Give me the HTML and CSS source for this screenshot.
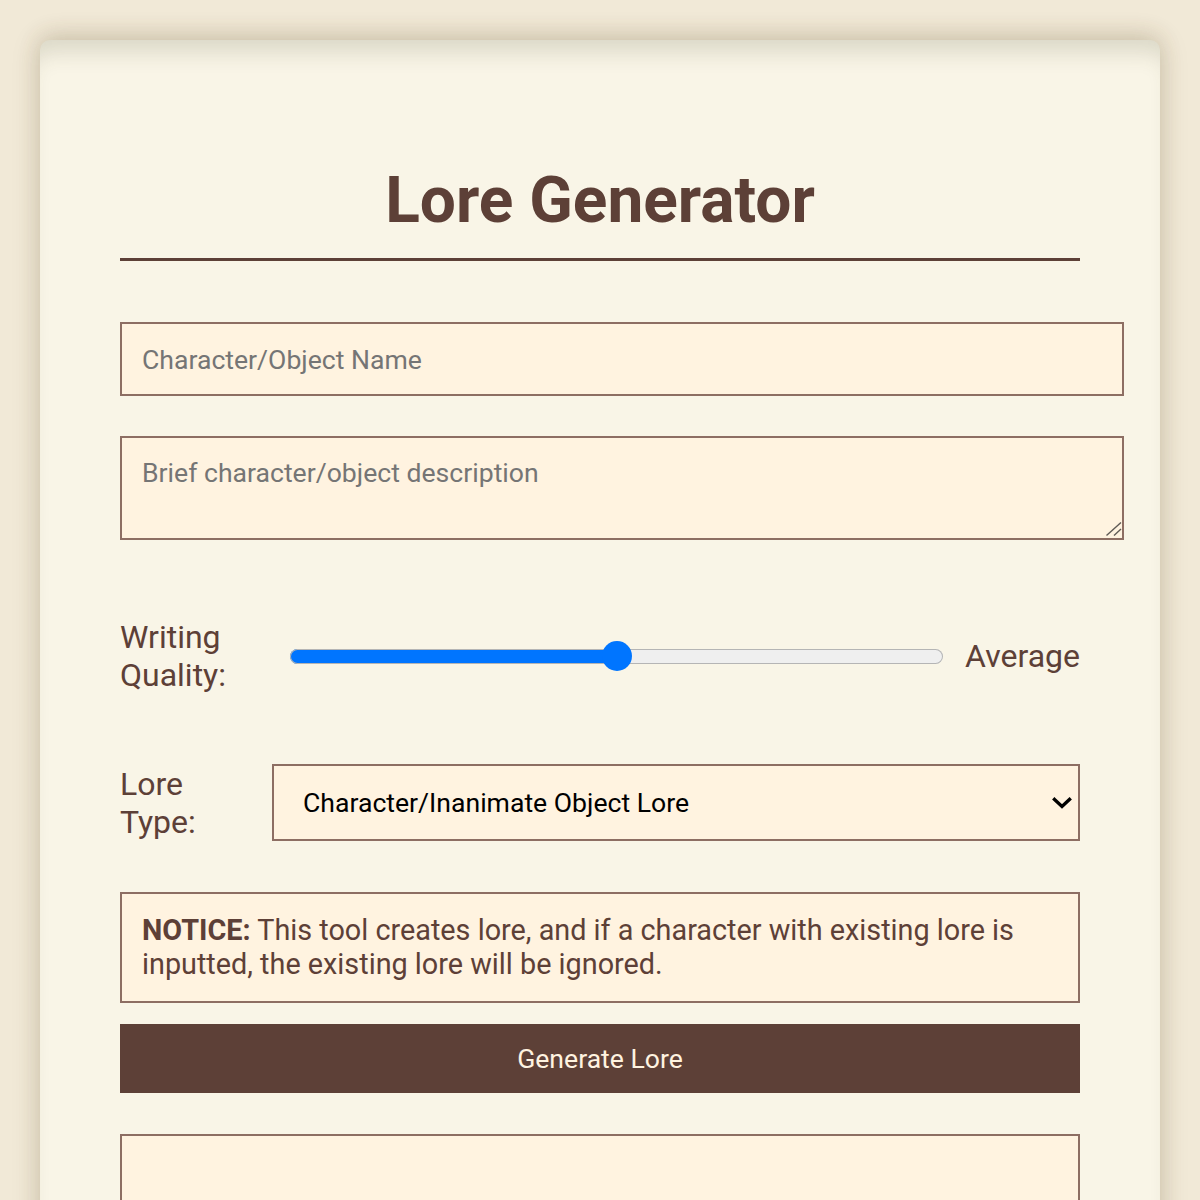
FILE: index.html
```html
<!DOCTYPE html>
<html lang="en">
<head>
<meta charset="utf-8">
<title>Lore Generator</title>
<link rel="stylesheet" href="styles.css">
</head>
<body>
<main class="card">
  <h1 class="title">Lore Generator</h1>
  <input class="field name-field" type="text" placeholder="Character/Object Name">
  <div class="desc-wrap">
    <textarea class="field desc-field" placeholder="Brief character/object description"></textarea>
    <svg class="grip" width="16" height="16" viewBox="0 0 16 16" aria-hidden="true">
      <line x1="0.5" y1="13.5" x2="15" y2="0.5" stroke="#5f5a55" stroke-width="1.4"/>
      <line x1="8" y1="13.5" x2="15" y2="7" stroke="#5f5a55" stroke-width="1.4"/>
    </svg>
  </div>

  <div class="row quality-row">
    <label class="row-label quality-label" for="quality">Writing Quality:</label>
    <input id="quality" class="quality-range" type="range" min="0" max="100" value="50">
    <span class="quality-value">Average</span>
  </div>

  <div class="row type-row">
    <label class="row-label type-label" for="loretype">Lore Type:</label>
    <div class="select-wrap">
      <select id="loretype" class="type-select">
        <option>Character/Inanimate Object Lore</option>
        <option>Location Lore</option>
        <option>Event Lore</option>
      </select>
      <svg class="chevron" width="20" height="12" viewBox="0 0 20 12" aria-hidden="true">
        <polyline points="2.5,2.5 10,9.5 17.5,2.5" fill="none" stroke="#000" stroke-width="3.4" stroke-linecap="square" stroke-linejoin="miter"/>
      </svg>
    </div>
  </div>

  <div class="notice"><strong>NOTICE:</strong> This tool creates lore, and if a character with existing lore is inputted, the existing lore will be ignored.</div>

  <button class="generate" type="button">Generate Lore</button>

  <div class="output"></div>
</main>
</body>
</html>
```

FILE: styles.css
```css
* {
  box-sizing: border-box;
}

html, body {
  margin: 0;
  padding: 0;
}

body {
  background: #f1e9d7;
  font-family: Roboto, "Liberation Sans", sans-serif;
  color: #5d4037;
  padding: 40px 40px 0;
  height: 1200px;
  overflow: hidden;
}

.card {
  max-width: 1120px;
  margin: 0 auto;
  background: #f9f5e7;
  border-radius: 10px 10px 0 0;
  padding: 123px 80px 80px;
  box-shadow:
    0 -4px 22px rgba(100, 80, 40, 0.16),
    0 0 30px rgba(90, 70, 30, 0.16),
    inset 0 24px 22px -12px rgba(70, 70, 40, 0.16);
  min-height: 1200px;
}

.title {
  margin: 0 0 61px;
  padding: 0 0 20px;
  text-align: center;
  font-size: 64px;
  font-weight: 700;
  line-height: 75px;
  color: #5d4037;
  border-bottom: 3px solid #5d4037;
}

.field {
  display: block;
  width: calc(100% + 44px);
  background: #fff3e0;
  border: 2px solid #8d6e63;
  border-radius: 0;
  font-family: Roboto, "Liberation Sans", sans-serif;
  font-size: 26.6px;
  color: #5d4037;
  padding: 0 20px;
  outline: none;
}

.field::placeholder {
  color: #757575;
}

.name-field {
  height: 74px;
  margin: 0 0 40px;
}

.desc-wrap {
  position: relative;
  width: calc(100% + 44px);
  margin: 0 0 78px;
}

.desc-field {
  width: 100%;
  height: 104px;
  padding-top: 19px;
  line-height: 32px;
  resize: none;
}

.grip {
  position: absolute;
  right: 2px;
  bottom: 2px;
  pointer-events: none;
}

.row {
  display: flex;
  align-items: center;
}

.row-label {
  font-size: 32px;
  line-height: 38px;
  color: #5d4037;
  flex: none;
}

.quality-row {
  height: 76px;
  margin-bottom: 70px;
}

.quality-label {
  width: 150px;
  margin-right: 20px;
}

.quality-range {
  -webkit-appearance: none;
  appearance: none;
  flex: 1;
  height: 30px;
  margin: 0 22px 0 0;
  background: transparent;
}

.quality-range::-webkit-slider-runnable-track {
  height: 15px;
  border-radius: 8px;
  background: linear-gradient(to right, #0075ff 0 50%, #efefef 50% 100%);
  box-shadow: inset 0 0 0 1px #b5b5b5;
}

.quality-range::-webkit-slider-thumb {
  -webkit-appearance: none;
  appearance: none;
  width: 30px;
  height: 30px;
  border-radius: 50%;
  background: #0075ff;
  border: none;
  margin-top: -7.5px;
}

.quality-value {
  font-size: 32px;
  line-height: 38px;
  color: #5d4037;
  flex: none;
}

.type-row {
  margin-bottom: 51px;
}

.type-label {
  width: 132px;
  margin-right: 20px;
}

.select-wrap {
  position: relative;
  flex: 1;
}

.type-select {
  -webkit-appearance: none;
  appearance: none;
  display: block;
  width: 100%;
  height: 77px;
  background: #fff3e0;
  border: 2px solid #8d6e63;
  border-radius: 0;
  padding: 0 40px 0 29px;
  font-family: Roboto, "Liberation Sans", sans-serif;
  font-size: 26.6px;
  color: #000;
  outline: none;
}

.chevron {
  position: absolute;
  right: 8px;
  top: 33px;
  pointer-events: none;
}

.notice {
  background: #fff3e0;
  border: 2px solid #8d6e63;
  padding: 19px 20px 20px;
  font-size: 28.8px;
  line-height: 34px;
  color: #5d4037;
  margin-bottom: 21px;
}

.notice strong {
  font-weight: 700;
}

.generate {
  display: block;
  width: 100%;
  height: 69px;
  background: #5d4037;
  color: #fff3e0;
  border: none;
  border-radius: 0;
  font-family: Roboto, "Liberation Sans", sans-serif;
  font-size: 26.6px;
  margin-bottom: 41px;
  cursor: pointer;
}

.output {
  background: #fff3e0;
  border: 2px solid #8d6e63;
  height: 200px;
}
```
